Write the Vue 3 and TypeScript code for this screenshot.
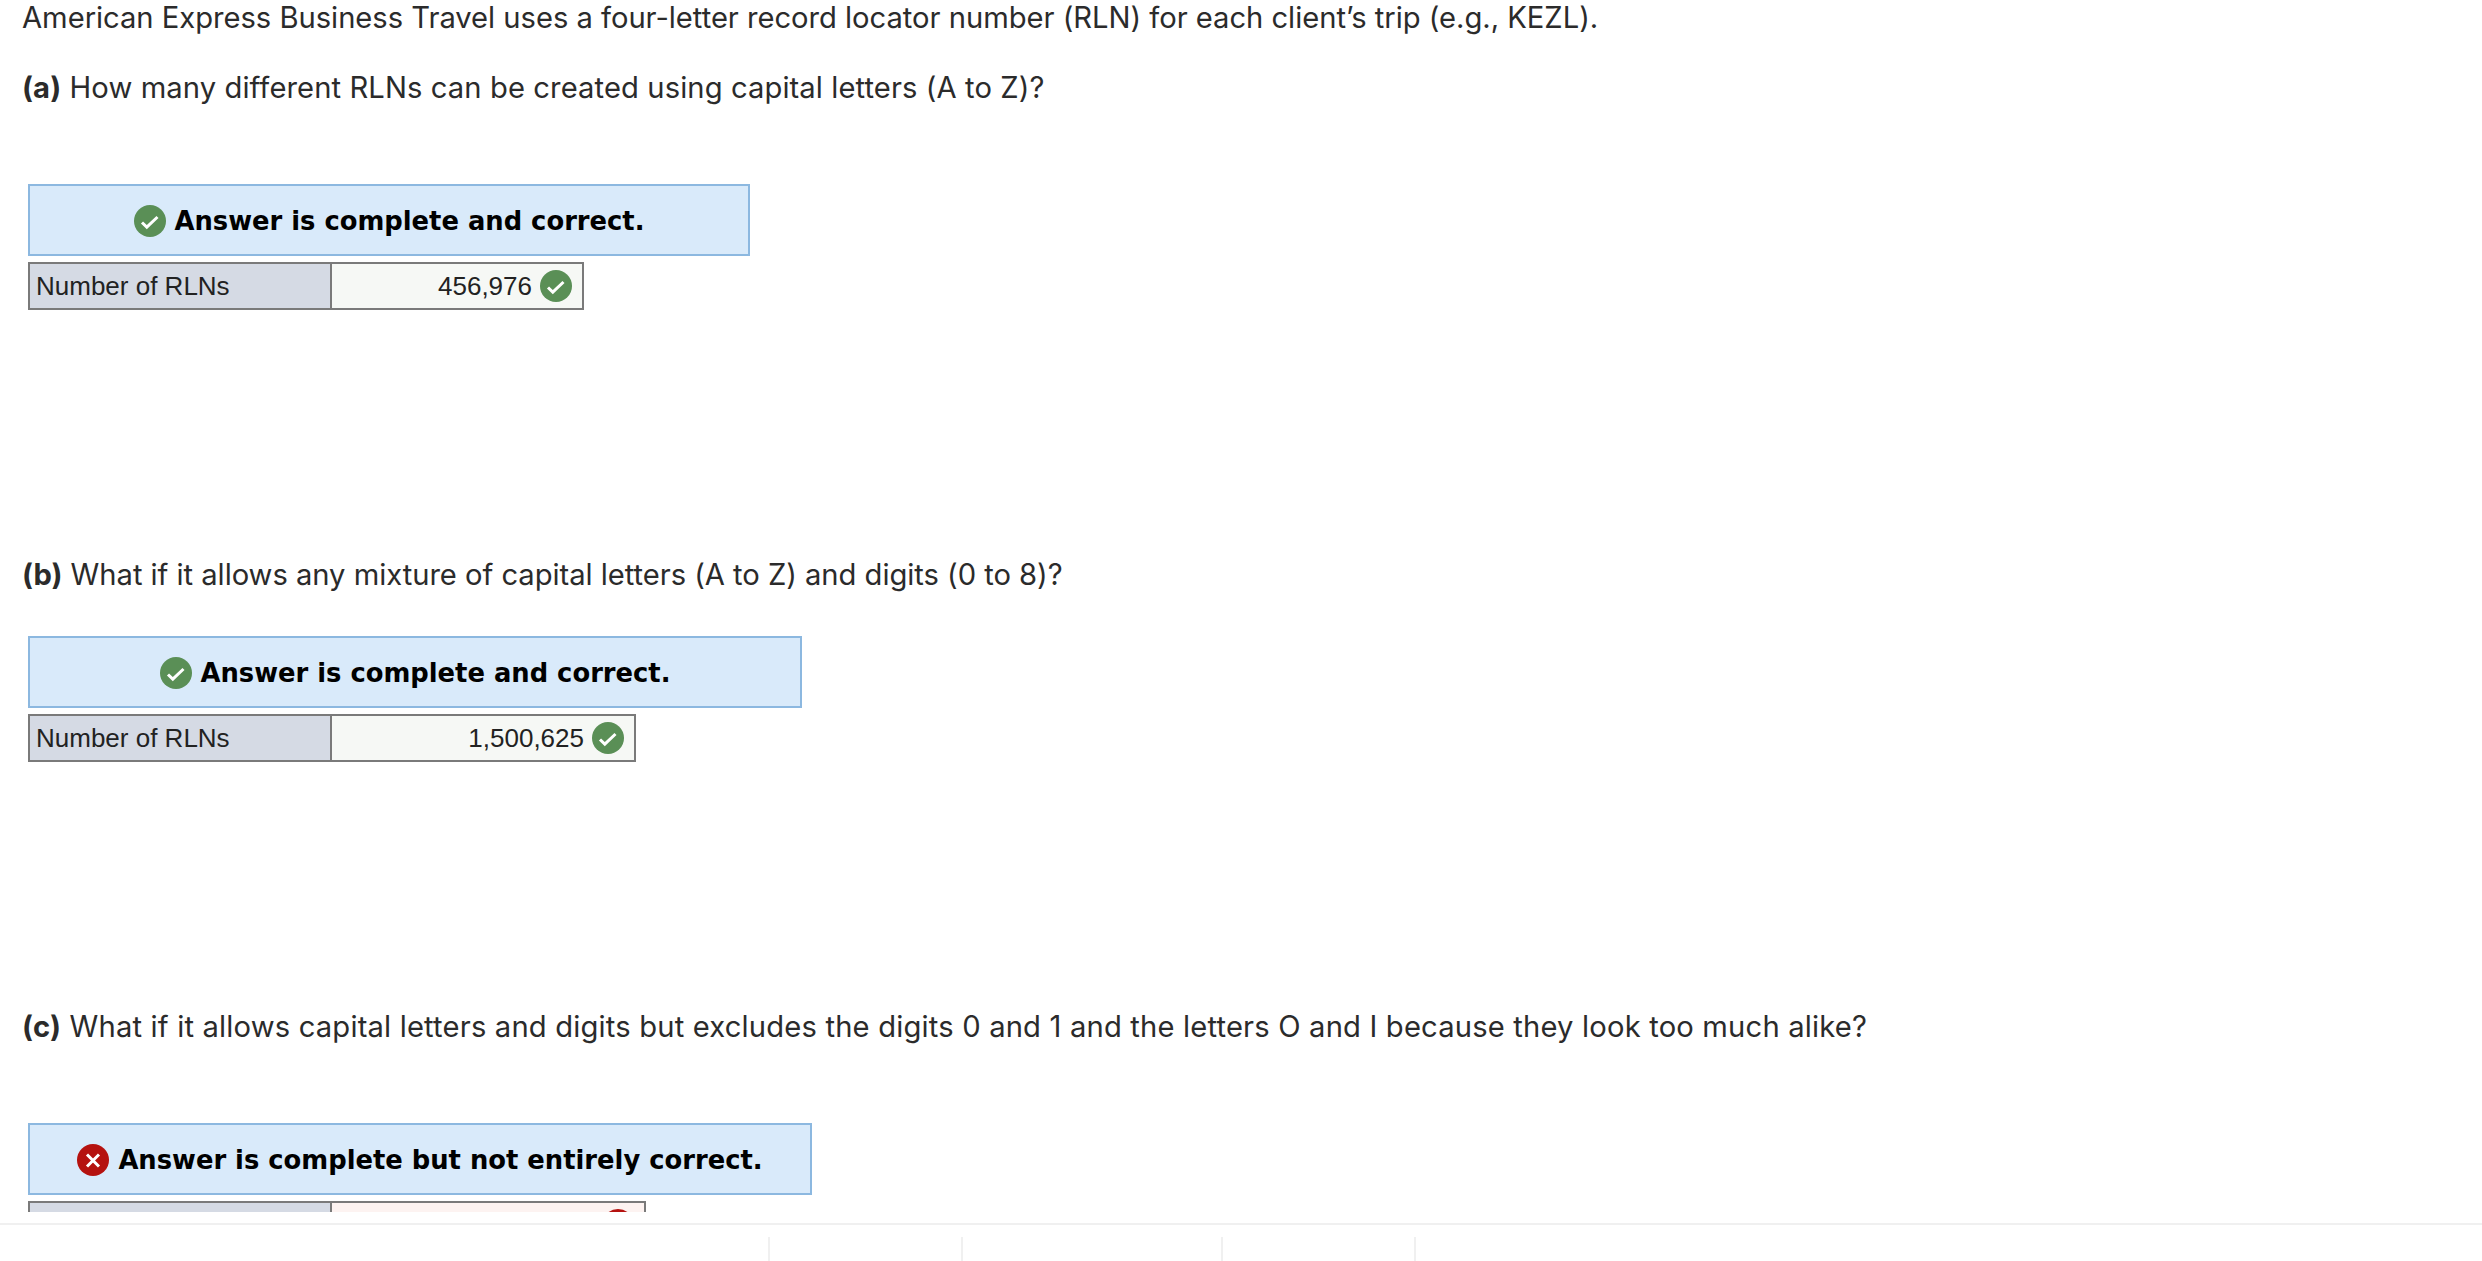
<script setup lang="ts">
interface Question {
  label: string
  text: string
  tracking: number
  message: string
  correct: boolean
  rowLabel: string
  value: string
  boxWidth: number
  tableWidth: number
  gapTop: number
  gapBottom: number
}

const questions: Question[] = [
  {
    label: '(a)',
    text: 'How many different RLNs can be created using capital letters (A to Z)?',
    tracking: 0.09,
    message: 'Answer is complete and correct.',
    correct: true,
    rowLabel: 'Number of RLNs',
    value: '456,976',
    boxWidth: 722,
    tableWidth: 556,
    gapTop: 34,
    gapBottom: 78
  },
  {
    label: '(b)',
    text: 'What if it allows any mixture of capital letters (A to Z) and digits (0 to 8)?',
    tracking: -0.04,
    message: 'Answer is complete and correct.',
    correct: true,
    rowLabel: 'Number of RLNs',
    value: '1,500,625',
    boxWidth: 774,
    tableWidth: 608,
    gapTop: 247,
    gapBottom: 43
  },
  {
    // the row of (c) is cut by the bottom of the scroll area, only its top edge shows
    label: '(c)',
    text: 'What if it allows capital letters and digits but excludes the digits 0 and 1 and the letters O and I because they look too much alike?',
    tracking: 0.17,
    message: 'Answer is complete but not entirely correct.',
    correct: false,
    rowLabel: '',
    value: '',
    boxWidth: 784,
    tableWidth: 618,
    gapTop: 247,
    gapBottom: 78
  }
]

const footerCells = [193, 260, 193, 200]
</script>

<template>
  <div class="page">
    <main class="content">
      <p class="line intro">American Express Business Travel uses a four-letter record locator number (RLN) for each client’s trip (e.g., KEZL).</p>

      <section v-for="q in questions" :key="q.label" class="question">
        <p
          class="line"
          :style="{ marginTop: q.gapTop + 'px', marginBottom: q.gapBottom + 'px', letterSpacing: q.tracking + 'px' }"
        >
          <b>{{ q.label }}</b> {{ q.text }}
        </p>
        <div class="result" :style="{ width: q.boxWidth + 'px' }">
          <svg class="icon" viewBox="0 0 32 32">
            <circle cx="16" cy="16" r="16" :fill="q.correct ? '#5a8f56' : '#b5120f'" />
            <path v-if="q.correct" d="M8 17.5l4.8 4.6L23.5 12" fill="none" stroke="#fff" stroke-width="3" />
            <path v-else d="M10 10.5l12 12M22 10.5l-12 12" fill="none" stroke="#fff" stroke-width="3" />
          </svg>
          <span>{{ q.message }}</span>
        </div>
        <div class="answer" :style="{ width: q.tableWidth + 'px' }">
          <div class="label">{{ q.rowLabel }}</div>
          <div class="value" :class="{ wrong: !q.correct }">
            <span>{{ q.value }}</span>
            <svg class="icon" viewBox="0 0 32 32">
              <circle cx="16" cy="16" r="16" :fill="q.correct ? '#5a8f56' : '#b5120f'" />
              <path v-if="q.correct" d="M8 17.5l4.8 4.6L23.5 12" fill="none" stroke="#fff" stroke-width="3" />
              <path v-else d="M10 10.5l12 12M22 10.5l-12 12" fill="none" stroke="#fff" stroke-width="3" />
            </svg>
          </div>
        </div>
      </section>
    </main>

    <footer class="footer">
      <div v-for="(w, i) in footerCells" :key="i" class="footer-cell" :style="{ width: w + 'px' }"></div>
    </footer>
  </div>
</template>

<style scoped>
.page {
  height: 1261px;
  overflow: hidden;
  background: #fff;
}

.content {
  height: 1212px;
  margin-bottom: 11px;
  overflow: hidden;
  padding-left: 22px;
  box-sizing: border-box;
}

.line {
  margin: 0;
  height: 36px;
  font-family: Inter, "Open Sans", sans-serif;
  font-size: 29.2px;
  line-height: 36px;
  color: #2b2b2b;
  white-space: nowrap;
}

.line.intro {
  letter-spacing: -0.03px;
}

.line b {
  font-weight: 700;
}

.result {
  display: flex;
  align-items: center;
  justify-content: center;
  gap: 9px;
  height: 72px;
  box-sizing: border-box;
  margin-left: 6px;
  padding-top: 1px;
  background: #d9eafa;
  border: 2px solid #8cb8e0;
  font-family: "DejaVu Sans", Verdana, sans-serif;
  font-size: 25.8px;
  font-weight: 700;
  color: #000;
}

.answer {
  display: flex;
  height: 48px;
  box-sizing: border-box;
  margin-top: 6px;
  margin-left: 6px;
  border: 2px solid #7a7a7a;
  font-family: "Liberation Sans", Arial, sans-serif;
  font-size: 26px;
  color: #222;
}

.label {
  flex: 0 0 302px;
  display: flex;
  align-items: center;
  padding-left: 6px;
  box-sizing: border-box;
  background: #d5dae4;
  border-right: 2px solid #7a7a7a;
}

.value {
  flex: 1;
  display: flex;
  align-items: center;
  justify-content: flex-end;
  gap: 8px;
  padding-right: 10px;
  background: #f6f8f5;
}

.value.wrong {
  background: #fdf3f1;
}

.icon {
  width: 32px;
  height: 32px;
  flex: none;
}

.footer {
  display: flex;
  height: 38px;
  padding-left: 768px;
  padding-top: 12px;
  border-top: 2px solid #f0f0f0;
}

.footer-cell {
  height: 26px;
  border-left: 2px solid #f0f0f0;
  box-sizing: border-box;
}
</style>
